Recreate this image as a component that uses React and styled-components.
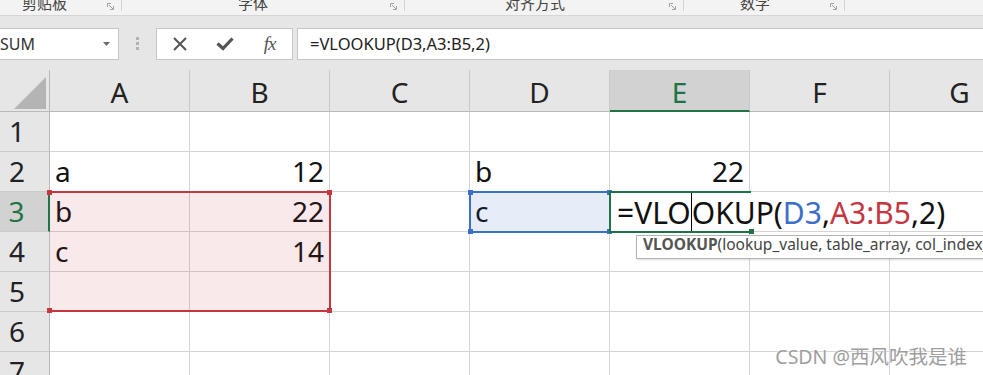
import React from 'react';
import styled, { createGlobalStyle } from 'styled-components';

const GREEN = '#217346';
const RED = '#c5373f';
const BLUE = '#3c6fc9';

const GlobalStyle = createGlobalStyle`
  html, body {
    margin: 0;
    padding: 0;
    background: #fff;
    overflow: hidden;
  }
  body {
    font-family: "Noto Sans", "Noto Sans CJK SC", sans-serif;
  }
`;

const Page = styled.div`
  position: relative;
  width: 983px;
  height: 375px;
  overflow: hidden;
  display: flex;
  flex-direction: column;
`;

/* ribbon group labels (only the lower half is in view) */
const Ribbon = styled.div`
  flex: none;
  height: 15px;
  display: flex;
  background: #f3f3f3;
  border-bottom: 1px solid #d6d6d6;
  overflow: hidden;
`;

const Group = styled.div`
  flex: none;
  width: ${({ $width }) => $width}px;
  display: flex;
  align-items: flex-start;
`;

const GroupLabel = styled.span`
  padding-left: ${({ $left }) => $left}px;
  margin-top: -4px;
  font-size: 15px;
  line-height: 15px;
  color: #444;
  white-space: nowrap;
`;

const Launcher = styled.svg`
  margin-left: auto;
  margin-top: 3px;
  margin-right: 7px;
  flex: none;
`;

const Separator = styled.div`
  flex: none;
  width: 1px;
  height: 11px;
  background: #d4d4d4;
`;

/* formula bar */
const FormulaBar = styled.div`
  flex: none;
  height: 54px;
  box-sizing: border-box;
  padding-top: 12px;
  display: flex;
  align-items: flex-start;
  background: #e6e6e6;
`;

const NameBox = styled.div`
  flex: none;
  width: 119px;
  height: 32px;
  box-sizing: border-box;
  display: flex;
  align-items: center;
  justify-content: space-between;
  background: #fff;
  border: 1px solid #c6c6c6;
  border-left: none;
  font-size: 16px;
  color: #333;
  padding-right: 8px;
`;

const Dots = styled.div`
  flex: none;
  margin: 9px 0 0 17px;
  display: flex;
  flex-direction: column;
  gap: 2px;

  span {
    width: 3px;
    height: 3px;
    background: #b3b3b3;
  }
`;

const ButtonBox = styled.div`
  flex: none;
  margin-left: 17px;
  width: 137px;
  height: 32px;
  box-sizing: border-box;
  display: flex;
  background: #fff;
  border: 1px solid #c6c6c6;
`;

const IconButton = styled.div`
  width: 45px;
  display: flex;
  align-items: center;
  justify-content: center;
  color: #555;
`;

const Fx = styled.span`
  font-family: "Liberation Serif", serif;
  font-style: italic;
  font-size: 19px;
  color: #555;
  letter-spacing: -1px;
`;

const FormulaInput = styled.div`
  flex: 1;
  margin-left: 4px;
  height: 32px;
  box-sizing: border-box;
  background: #fff;
  border: 1px solid #c6c6c6;
  border-right: none;
  padding-left: 12px;
  font-size: 16.5px;
  line-height: 30px;
  color: #222;
  white-space: nowrap;
`;

/* sheet */
const Sheet = styled.div`
  position: relative;
  flex: 1;
  overflow: hidden;
`;

const Grid = styled.div`
  display: grid;
  grid-template-columns: 50px repeat(7, 140px);
  grid-template-rows: 42px repeat(7, 40px);
  width: max-content;
  font-size: 28px;
`;

const Corner = styled.div`
  box-sizing: border-box;
  display: flex;
  align-items: flex-end;
  justify-content: flex-end;
  padding: 0 3px 2px 0;
  background: #e6e6e6;
  border-right: 1px solid #b9b9b9;
  border-bottom: 1px solid #b9b9b9;
`;

const ColHeader = styled.div`
  box-sizing: border-box;
  padding-top: 4px;
  line-height: 37px;
  text-align: center;
  background: ${({ $active }) => ($active ? '#d2d2d2' : '#e6e6e6')};
  color: ${({ $active }) => ($active ? GREEN : '#222')};
  border-right: 1px solid #c8c8c8;
  border-bottom: ${({ $active }) => ($active ? `2px solid ${GREEN}` : '1px solid #b9b9b9')};
`;

const RowHeader = styled.div`
  box-sizing: border-box;
  padding-right: 15px;
  line-height: 39px;
  text-align: center;
  background: ${({ $active }) => ($active ? '#d2d2d2' : '#e6e6e6')};
  color: ${({ $active }) => ($active ? GREEN : '#222')};
  border-right: ${({ $active }) => ($active ? `2px solid ${GREEN}` : '1px solid #b9b9b9')};
  border-bottom: 1px solid #cbcbcb;
`;

const Cell = styled.div`
  box-sizing: border-box;
  padding: 0 5px;
  line-height: 39px;
  white-space: nowrap;
  overflow: hidden;
  text-align: ${({ $num }) => ($num ? 'right' : 'left')};
  color: #111;
  border-right: 1px solid #d4d4d4;
  border-bottom: 1px solid #d4d4d4;
`;

/* selection overlays */
const Frame = styled.div`
  position: absolute;
  box-sizing: border-box;
  left: ${({ $x }) => $x}px;
  top: ${({ $y }) => $y}px;
  width: ${({ $w }) => $w}px;
  height: ${({ $h }) => $h}px;
  background: ${({ $fill }) => $fill || 'transparent'};
  border: 2px solid ${({ $color }) => $color};
  ${({ $open }) => $open && `border-${$open}: none;`}
`;

const Handle = styled.span`
  position: absolute;
  width: 5px;
  height: 5px;
  background: ${({ $color }) => $color};
  ${({ $v }) => $v}: -3px;
  ${({ $h }) => $h}: -3px;
`;

const Editor = styled.div`
  position: absolute;
  left: 611px;
  top: 123px;
  right: 0;
  height: 38px;
  display: flex;
  align-items: flex-start;
  padding-left: 6px;
  background: #fff;
  font-size: 30px;
  line-height: 37px;
  padding-top: 1px;
  box-sizing: border-box;
  white-space: nowrap;
  color: #111;
`;

const Ref = styled.span`
  color: ${({ $color }) => $color || '#111'};
`;

const Caret = styled.span`
  width: 1px;
  height: 39px;
  margin-top: -2px;
  background: #000;
  flex: none;
`;

const Tooltip = styled.div`
  position: absolute;
  left: 636px;
  top: 165px;
  width: 400px;
  height: 24px;
  box-sizing: border-box;
  padding-left: 6px;
  background: #fff;
  border: 1px solid #b3b3b3;
  box-shadow: 1px 1px 2px rgba(0, 0, 0, 0.15);
  font-size: 15.5px;
  line-height: 16px;
  color: #444;
  white-space: nowrap;

  b {
    color: #555;
  }
`;

const Watermark = styled.div`
  position: absolute;
  right: 16px;
  bottom: 5px;
  font-size: 19.5px;
  color: #9e9e9e;
  text-shadow: 0 0 1px #fff, 0 0 2px #fff;
  white-space: nowrap;
`;

const groups = [
  { label: '剪贴板', width: 122, left: 22 },
  { label: '字体', width: 283, left: 116 },
  { label: '对齐方式', width: 279, left: 100 },
  { label: '数字', width: 161, left: 56 },
];

const columns = ['A', 'B', 'C', 'D', 'E', 'F', 'G'];
const rows = [1, 2, 3, 4, 5, 6, 7];

const values = {
  A2: 'a',
  B2: 12,
  A3: 'b',
  B3: 22,
  A4: 'c',
  B4: 14,
  D2: 'b',
  E2: 22,
  D3: 'c',
};

const corners = [
  ['top', 'left'],
  ['top', 'right'],
  ['bottom', 'left'],
  ['bottom', 'right'],
];

const LauncherIcon = () => (
  <Launcher width="7" height="7" viewBox="0 0 7 7" fill="none" stroke="#a3a3a3" strokeWidth="1">
    <path d="M0.5 4V0.5H4" />
    <path d="M2 2L6 6" />
    <path d="M6.5 3V6.5H3" />
  </Launcher>
);

const App = () => {
  return (
    <Page>
      <GlobalStyle />
      <Ribbon>
        {groups.map((g) => (
          <Group key={g.label} $width={g.width}>
            <GroupLabel $left={g.left}>{g.label}</GroupLabel>
            <LauncherIcon />
            <Separator />
          </Group>
        ))}
      </Ribbon>

      <FormulaBar>
        <NameBox>
          <span>SUM</span>
          <svg width="7" height="4" viewBox="0 0 7 4">
            <path d="M0 0H7L3.5 4Z" fill="#6b6b6b" />
          </svg>
        </NameBox>
        <Dots>
          <span />
          <span />
          <span />
        </Dots>
        <ButtonBox>
          <IconButton>
            <svg width="16" height="14" viewBox="0 0 16 14" stroke="#555" strokeWidth="2">
              <path d="M2 1L14 13M14 1L2 13" />
            </svg>
          </IconButton>
          <IconButton>
            <svg width="18" height="14" viewBox="0 0 18 14" fill="none" stroke="#555" strokeWidth="3.2" strokeLinejoin="miter">
              <path d="M1.5 6.5L7 11.5L16.5 1.5" />
            </svg>
          </IconButton>
          <IconButton>
            <Fx>fx</Fx>
          </IconButton>
        </ButtonBox>
        <FormulaInput>=VLOOKUP(D3,A3:B5,2)</FormulaInput>
      </FormulaBar>

      <Sheet>
        <Grid>
          <Corner>
            <svg width="32" height="32" viewBox="0 0 32 32">
              <path d="M32 0V32H0Z" fill="#b4b4b4" />
            </svg>
          </Corner>
          {columns.map((c) => (
            <ColHeader key={c} $active={c === 'E'}>
              {c}
            </ColHeader>
          ))}
          {rows.map((r) => (
            <React.Fragment key={r}>
              <RowHeader $active={r === 3}>{r}</RowHeader>
              {columns.map((c) => {
                const v = values[`${c}${r}`];
                return (
                  <Cell key={c} $num={typeof v === 'number'}>
                    {v}
                  </Cell>
                );
              })}
            </React.Fragment>
          ))}
        </Grid>

        <Frame $x={50} $y={121} $w={281} $h={121} $color={RED} $fill="rgba(197, 55, 63, 0.11)" $open="left">
          {corners.map(([v, h]) => (
            <Handle key={v + h} $v={v} $h={h} $color={RED} />
          ))}
        </Frame>

        <Frame $x={469} $y={121} $w={142} $h={42} $color={BLUE} $fill="rgba(60, 111, 201, 0.12)">
          {corners.map(([v, h]) => (
            <Handle key={v + h} $v={v} $h={h} $color={BLUE} />
          ))}
        </Frame>

        <Editor>
          <Ref>=VLO</Ref>
          <Caret />
          <Ref>OKUP(</Ref>
          <Ref $color={BLUE}>D3</Ref>
          <Ref>,</Ref>
          <Ref $color={RED}>A3:B5</Ref>
          <Ref>,2)</Ref>
        </Editor>

        <Frame $x={609} $y={121} $w={142} $h={42} $color={GREEN} $open="right">
          <Handle $v="bottom" $h="right" $color={GREEN} />
        </Frame>

        <Tooltip>
          <b>VLOOKUP</b>(lookup_value, table_array, col_index_num, [range_lookup])
        </Tooltip>
      </Sheet>

      <Watermark>CSDN @西风吹我是谁</Watermark>
    </Page>
  );
};

export default App;
